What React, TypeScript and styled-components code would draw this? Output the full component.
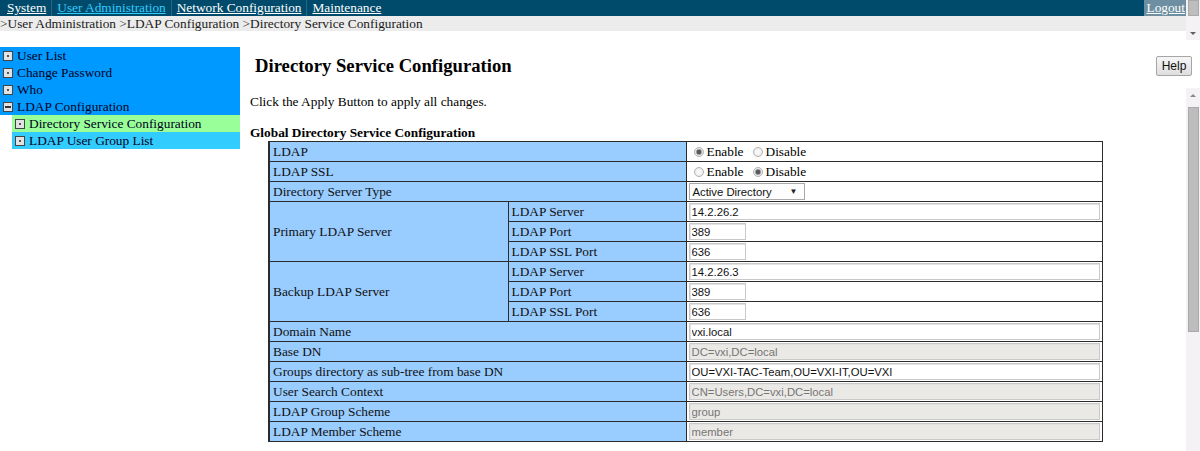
import React from "react";
import styled, { createGlobalStyle } from "styled-components";

const GlobalStyle = createGlobalStyle`
  html, body {
    margin: 0;
    padding: 0;
    background: #ffffff;
  }
  body {
    font-family: "Liberation Serif", "Times New Roman", serif;
    font-size: 13.33px;
    color: #000000;
    overflow: hidden;
  }
`;

const Page = styled.div`
  width: 1200px;
  height: 451px;
  display: flex;
  flex-direction: column;
  overflow: hidden;
`;

/* ---------- top frame: menu bar + breadcrumb ---------- */

const TopFrame = styled.div`
  height: 40px;
  flex-shrink: 0;
  display: flex;
`;

const TopBody = styled.div`
  flex: 1;
  display: flex;
  flex-direction: column;
`;

const MenuBar = styled.div`
  height: 16px;
  background: #004b6b;
  display: flex;
  align-items: stretch;
  justify-content: space-between;
  padding-left: 2px;
`;

const MenuLinks = styled.div`
  display: flex;
  align-items: stretch;
`;

const MenuLink = styled.a<{ $active?: boolean; $divider?: boolean }>`
  display: block;
  padding: 0 5px;
  line-height: 16px;
  color: ${(p) => (p.$active ? "#33ccff" : "#ffffff")};
  text-decoration: underline;
  border-left: ${(p) => (p.$divider ? "1px solid #1f6784" : "none")};
  white-space: nowrap;
  cursor: pointer;
`;

const Logout = styled.a`
  display: block;
  line-height: 16px;
  padding: 0 1px 0 2px;
  color: #ffffff;
  background: #6d8fa1;
  text-decoration: underline;
  cursor: pointer;
`;

const Crumbs = styled.div`
  height: 15px;
  line-height: 15px;
  background: #ececec;
  color: #1a1a1a;
  white-space: nowrap;
`;

/* ---------- scrollbars ---------- */

const ScrollTrack = styled.div`
  width: 14px;
  flex-shrink: 0;
  background: #f4f2f4;
  display: flex;
  flex-direction: column;
  align-items: center;
`;

const ScrollThumb = styled.div<{ $top: number; $height: number }>`
  margin-top: ${(p) => p.$top}px;
  width: 11px;
  height: ${(p) => p.$height}px;
  background: #bdbdbd;
  border: 1px solid #a9a9a9;
  box-sizing: border-box;
`;

const ScrollArrow = styled.div<{ $dir: "up" | "down"; $top: number }>`
  margin-top: ${(p) => p.$top}px;
  width: 0;
  height: 0;
  border-left: 3px solid transparent;
  border-right: 3px solid transparent;
  ${(p) =>
    p.$dir === "up"
      ? "border-bottom: 3px solid #8a8a8a;"
      : "border-top: 3px solid #606060;"}
`;

/* ---------- lower frames ---------- */

const Frames = styled.div`
  flex: 1;
  display: flex;
  min-height: 0;
`;

const SideFrame = styled.nav`
  width: 240px;
  flex-shrink: 0;
  padding-top: 7px;
`;

const TreeItem = styled.div<{ $bg: string; $indent?: number }>`
  height: 17px;
  margin-left: ${(p) => p.$indent ?? 0}px;
  background: ${(p) => p.$bg};
  display: flex;
  align-items: center;
  gap: 4px;
  padding-left: 3px;
  color: #000022;
  white-space: nowrap;
  line-height: 17px;
`;

const MainFrame = styled.div`
  flex: 1;
  display: flex;
  flex-direction: column;
  min-width: 0;
`;

const TitleFrame = styled.header`
  height: 48px;
  flex-shrink: 0;
  display: flex;
  justify-content: space-between;
  align-items: flex-start;
  padding: 0 8px 0 15px;
`;

const Heading = styled.h2`
  margin: 15px 0 0;
  font-size: 18.67px;
  font-weight: bold;
  line-height: 21px;
`;

const HelpButton = styled.button`
  margin-top: 16px;
  width: 36px;
  height: 20px;
  padding: 0;
  font-family: "Liberation Sans", Arial, sans-serif;
  font-size: 12px;
  color: #111;
  background: linear-gradient(#f6f6f6, #dedede);
  border: 1px solid #a6a6a6;
  border-radius: 2px;
`;

const ContentFrame = styled.div`
  flex: 1;
  display: flex;
  min-height: 0;
`;

const ContentBody = styled.main`
  flex: 1;
  padding: 6px 0 0 10px;
`;

const Note = styled.p`
  margin: 0;
  line-height: 15px;
`;

const SectionTitle = styled.div`
  margin-top: 16px;
  line-height: 15px;
  font-weight: bold;
`;

/* ---------- configuration table ---------- */

const ConfigTable = styled.table`
  margin: 1px 0 0 18px;
  width: 835px;
  border-collapse: collapse;
  border-left: 2px solid #2b2b2b;
  table-layout: fixed;
  font-family: "Liberation Serif", "Times New Roman", serif;
  font-size: 13.33px;
  font-weight: normal;
`;

const LabelCell = styled.td`
  height: 19px;
  padding: 0 0 0 3px;
  background: #99ccff;
  border: 1px solid #2b2b2b;
  line-height: 19px;
  font-weight: normal;
  color: #111;
  white-space: nowrap;
  vertical-align: middle;
`;

const ValueCell = styled.td`
  height: 19px;
  padding: 0 0 0 2px;
  background: #ffffff;
  border: 1px solid #2b2b2b;
  font-weight: normal;
  vertical-align: middle;
`;

const RadioGroup = styled.div`
  display: flex;
  align-items: center;
  line-height: 19px;
`;

const RadioOption = styled.label`
  display: flex;
  align-items: center;
  margin-right: 4px;
`;

const RadioDot = styled.span<{ $checked?: boolean }>`
  display: inline-block;
  width: 10px;
  height: 10px;
  margin: 0 3px 0 5px;
  border-radius: 50%;
  border: 1px solid #b4b4b4;
  background: ${(p) =>
    p.$checked
      ? "radial-gradient(circle, #5a5a5a 0 2px, #9a9a9a 2.5px, #e9e9e9 3.5px)"
      : "radial-gradient(circle, #f7f7f7 0 2px, #e4e4e4 5px)"};
  box-sizing: border-box;
`;

const SelectBox = styled.div`
  width: 116px;
  height: 17px;
  box-sizing: border-box;
  border: 1px solid #a9a9a9;
  background: #fdfdfd;
  display: flex;
  align-items: center;
  justify-content: space-between;
  padding: 0 6px 0 3px;
  font-family: "Liberation Sans", Arial, sans-serif;
  font-size: 11.3px;
  color: #111;
`;

const Caret = styled.span`
  font-size: 8px;
  color: #222;
`;

const TextField = styled.input<{ $narrow?: boolean }>`
  display: block;
  width: ${(p) => (p.$narrow ? "57px" : "411px")};
  height: 17px;
  box-sizing: border-box;
  margin: 0;
  padding: 0 2px;
  border: 1px solid #c9c9c9;
  box-shadow: inset 1px 1px 0 #e2e2e2;
  background: #ffffff;
  font-family: "Liberation Sans", Arial, sans-serif;
  font-size: 11.3px;
  color: #111;
  outline: none;

  &:disabled {
    background: #ebe9e6;
    color: #757575;
  }
`;

/* ---------- tree icons ---------- */

const NodeIcon = ({ open }: { open?: boolean }) => (
  <svg width="10" height="10" viewBox="0 0 10 10" aria-hidden>
    <rect x="0.5" y="0.5" width="9" height="9" fill="#e2e2e2" stroke="#444" />
    {open ? (
      <rect x="2" y="4" width="6" height="2" fill="#333" />
    ) : (
      <rect x="4" y="4" width="2" height="2" fill="#555" />
    )}
  </svg>
);

type Radio = { on: boolean };

const EnableDisable = ({ on }: Radio) => (
  <RadioGroup>
    <RadioOption>
      <RadioDot $checked={on} />
      Enable
    </RadioOption>
    <RadioOption>
      <RadioDot $checked={!on} />
      Disable
    </RadioOption>
  </RadioGroup>
);

const serverRows = (title: string, host: string) => [
  <tr key={title + "-host"}>
    <LabelCell rowSpan={3}>{title}</LabelCell>
    <LabelCell>LDAP Server</LabelCell>
    <ValueCell>
      <TextField defaultValue={host} />
    </ValueCell>
  </tr>,
  <tr key={title + "-port"}>
    <LabelCell>LDAP Port</LabelCell>
    <ValueCell>
      <TextField $narrow defaultValue="389" />
    </ValueCell>
  </tr>,
  <tr key={title + "-ssl"}>
    <LabelCell>LDAP SSL Port</LabelCell>
    <ValueCell>
      <TextField $narrow defaultValue="636" />
    </ValueCell>
  </tr>,
];

const fields: { label: string; value: string; locked?: boolean }[] = [
  { label: "Domain Name", value: "vxi.local" },
  { label: "Base DN", value: "DC=vxi,DC=local", locked: true },
  { label: "Groups directory as sub-tree from base DN", value: "OU=VXI-TAC-Team,OU=VXI-IT,OU=VXI" },
  { label: "User Search Context", value: "CN=Users,DC=vxi,DC=local", locked: true },
  { label: "LDAP Group Scheme", value: "group", locked: true },
  { label: "LDAP Member Scheme", value: "member", locked: true },
];

export default function App() {
  return (
    <Page>
      <GlobalStyle />
      <TopFrame>
        <TopBody>
          <MenuBar>
            <MenuLinks>
              <MenuLink>System</MenuLink>
              <MenuLink $active $divider>
                User Administration
              </MenuLink>
              <MenuLink $divider>Network Configuration</MenuLink>
              <MenuLink $divider>Maintenance</MenuLink>
            </MenuLinks>
            <Logout>Logout</Logout>
          </MenuBar>
          <Crumbs>&gt;User Administration &gt;LDAP Configuration &gt;Directory Service Configuration</Crumbs>
        </TopBody>
        <ScrollTrack>
          <ScrollThumb $top={0} $height={16} />
          <ScrollArrow $dir="down" $top={16} />
        </ScrollTrack>
      </TopFrame>

      <Frames>
        <SideFrame>
          <TreeItem $bg="#0099ff">
            <NodeIcon />
            User List
          </TreeItem>
          <TreeItem $bg="#0099ff">
            <NodeIcon />
            Change Password
          </TreeItem>
          <TreeItem $bg="#0099ff">
            <NodeIcon />
            Who
          </TreeItem>
          <TreeItem $bg="#0099ff">
            <NodeIcon open />
            LDAP Configuration
          </TreeItem>
          <TreeItem $bg="#99ff99" $indent={12}>
            <NodeIcon />
            Directory Service Configuration
          </TreeItem>
          <TreeItem $bg="#33ccff" $indent={12}>
            <NodeIcon />
            LDAP User Group List
          </TreeItem>
        </SideFrame>

        <MainFrame>
          <TitleFrame>
            <Heading>Directory Service Configuration</Heading>
            <HelpButton>Help</HelpButton>
          </TitleFrame>
          <ContentFrame>
            <ContentBody>
              <Note>Click the Apply Button to apply all changes.</Note>
              <SectionTitle>Global Directory Service Configuration</SectionTitle>
              <ConfigTable>
                <colgroup>
                  <col style={{ width: 239 }} />
                  <col style={{ width: 178 }} />
                  <col />
                </colgroup>
                <tbody>
                  <tr>
                    <LabelCell colSpan={2}>LDAP</LabelCell>
                    <ValueCell>
                      <EnableDisable on />
                    </ValueCell>
                  </tr>
                  <tr>
                    <LabelCell colSpan={2}>LDAP SSL</LabelCell>
                    <ValueCell>
                      <EnableDisable on={false} />
                    </ValueCell>
                  </tr>
                  <tr>
                    <LabelCell colSpan={2}>Directory Server Type</LabelCell>
                    <ValueCell>
                      <SelectBox>
                        Active Directory
                        <Caret>▼</Caret>
                      </SelectBox>
                    </ValueCell>
                  </tr>
                  {serverRows("Primary LDAP Server", "14.2.26.2")}
                  {serverRows("Backup LDAP Server", "14.2.26.3")}
                  {fields.map((f) => (
                    <tr key={f.label}>
                      <LabelCell colSpan={2}>{f.label}</LabelCell>
                      <ValueCell>
                        <TextField defaultValue={f.value} disabled={f.locked} />
                      </ValueCell>
                    </tr>
                  ))}
                </tbody>
              </ConfigTable>
            </ContentBody>
            <ScrollTrack>
              <ScrollArrow $dir="up" $top={6} />
              <ScrollThumb $top={10} $height={225} />
            </ScrollTrack>
          </ContentFrame>
        </MainFrame>
      </Frames>
    </Page>
  );
}
